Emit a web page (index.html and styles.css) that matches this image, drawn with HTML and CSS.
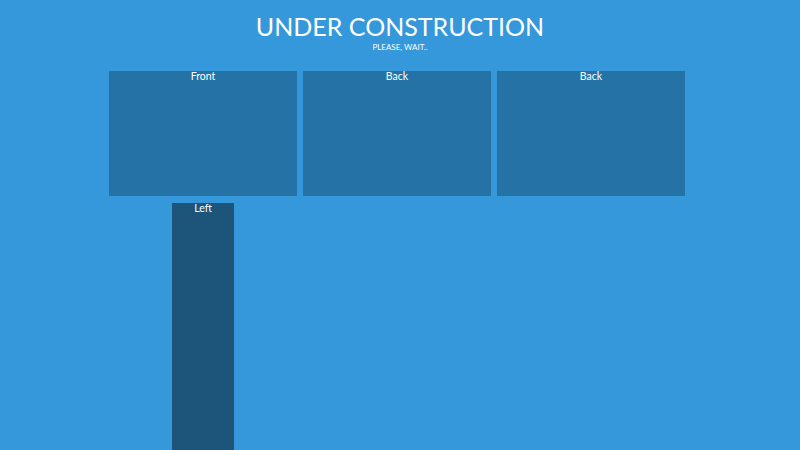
FILE: index.html
```html
<!DOCTYPE html>
<html>
<head>
<meta charset="utf-8">
<link rel="stylesheet" href="styles.css">
</head>
<body>
<header class="head">
  <h1 class="title">UNDER CONSTRUCTION</h1>
  <p class="sub">PLEASE, WAIT..</p>
</header>
<div class="row">
  <div class="face">Front</div>
  <div class="face">Back</div>
  <div class="face">Back</div>
</div>
<div class="row2">
  <div class="left">Left</div>
</div>
</body>
</html>
```
FILE: styles.css
```css
html, body {
  margin: 0;
  padding: 0;
  height: 100%;
  overflow: hidden;
}
body {
  background: #3498db;
  font-family: Lato, "Noto Sans", sans-serif;
  color: #fff;
}
.head {
  text-align: center;
  padding-top: 11px;
}
.title {
  margin: 0;
  font-weight: 400;
  font-size: 25px;
  line-height: 30px;
}
.sub {
  margin: 2px 0 0;
  font-size: 8px;
  line-height: 9px;
}
.row {
  display: flex;
  gap: 6px;
  padding-left: 109px;
  margin-top: 19px;
}
.face {
  width: 188px;
  height: 125px;
  background: #2573a6;
  text-align: center;
  font-size: 10.5px;
  line-height: 11px;
  padding-top: 0;
  box-sizing: border-box;
}
.row2 {
  padding-left: 172px;
  margin-top: 7px;
}
.left {
  width: 62px;
  height: 260px;
  background: #1d5479;
  text-align: center;
  font-size: 10.5px;
  line-height: 11px;
  padding-top: 0;
  box-sizing: border-box;
}
```
